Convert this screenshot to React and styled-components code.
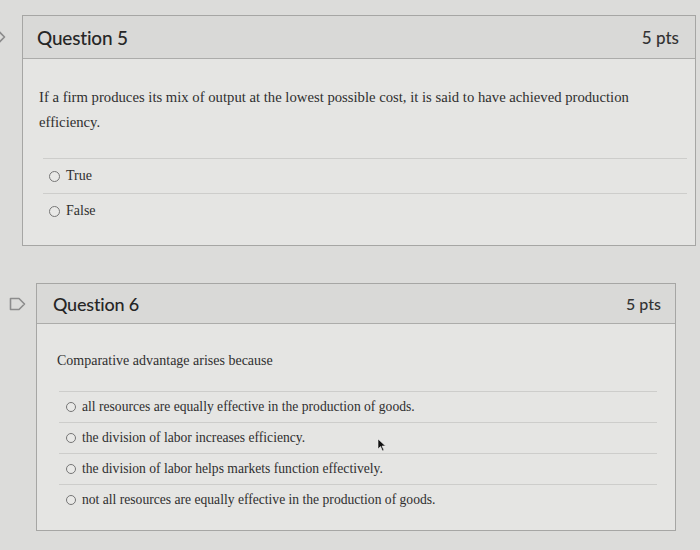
import styled, { createGlobalStyle } from "styled-components";

const GlobalStyle = createGlobalStyle`
  html, body {
    margin: 0;
    padding: 0;
    background: #dcdcda;
  }
  * { box-sizing: border-box; }
`;

const questions = [
  {
    id: 5,
    text: "If a firm produces its mix of output at the lowest possible cost, it is said to have achieved production efficiency.",
    answers: ["True", "False"],
    d: {
      cardLeft: 22, cardWidth: 674, headH: 43, titleSize: 19, ptsSize: 17,
      titlePad: 14, ptsPad: 16, bodyPad: 16, textTop: 26, textSize: 14.7, textGap: 23,
      optLeft: 20, optRight: 8, rowH: 35, optSize: 14, radio: 11,
      radioPad: 6, bottom: 17, flagShift: -11,
    },
  },
  {
    id: 6,
    text: "Comparative advantage arises because",
    answers: [
      "all resources are equally effective in the production of goods.",
      "the division of labor increases efficiency.",
      "the division of labor helps markets function effectively.",
      "not all resources are equally effective in the production of goods.",
    ],
    d: {
      cardLeft: 36, cardWidth: 640, headH: 40, titleSize: 18, ptsSize: 16,
      titlePad: 16, ptsPad: 14, bodyPad: 20, textTop: 24, textSize: 14, textGap: 18,
      optLeft: 22, optRight: 18, rowH: 31, optSize: 13.6, radio: 10,
      radioPad: 7, bottom: 15, flagShift: 9,
    },
  },
];

const Page = styled.div`
  position: relative;
  width: 700px;
  height: 550px;
  overflow: hidden;
  padding-top: 15px;
  display: flex;
  flex-direction: column;
  gap: 37px;
`;

const Row = styled.div`
  display: flex;
  align-items: flex-start;
`;

const FlagSlot = styled.div`
  width: ${(p) => p.$w}px;
  height: ${(p) => p.$h}px;
  flex: none;
  display: flex;
  align-items: center;
  overflow: visible;
`;

const Flag = styled.svg`
  flex: none;
  margin-left: ${(p) => p.$shift}px;
`;

const Card = styled.section`
  width: ${(p) => p.$w}px;
  border: 1px solid #a6a6a4;
  background: #e5e5e3;
`;

const Header = styled.header`
  height: ${(p) => p.$d.headH}px;
  display: flex;
  align-items: center;
  justify-content: space-between;
  padding: 0 ${(p) => p.$d.ptsPad}px 0 ${(p) => p.$d.titlePad}px;
  background: #d9d9d7;
  border-bottom: 1px solid #acacaa;
  font-family: Lato, "Noto Sans", sans-serif;
  color: #262626;
`;

const Title = styled.h2`
  margin: 0;
  font-size: ${(p) => p.$size}px;
  font-weight: 500;
  letter-spacing: -0.2px;
`;

const Points = styled.span`
  font-size: ${(p) => p.$size}px;
  font-weight: 500;
  color: #333;
`;

const Body = styled.div`
  padding: ${(p) => p.$d.textTop}px ${(p) => p.$d.optRight}px ${(p) => p.$d.bottom}px ${(p) => p.$d.bodyPad}px;
  font-family: "Liberation Serif", "Times New Roman", serif;
  color: #2f2f2f;
`;

const Prompt = styled.p`
  margin: 0 0 ${(p) => p.$gap}px;
  font-size: ${(p) => p.$size}px;
  line-height: 25px;
  padding-right: 40px;
`;

const Answers = styled.ul`
  list-style: none;
  margin: 0 0 0 ${(p) => p.$inset}px;
  padding: 0;
`;

const Answer = styled.li`
  height: ${(p) => p.$h}px;
  border-top: 1px solid #cdcdcb;
  display: flex;
  align-items: center;
  gap: 6px;
  padding-left: ${(p) => p.$pad}px;
  font-size: ${(p) => p.$size}px;
`;

const Radio = styled.span`
  width: ${(p) => p.$s}px;
  height: ${(p) => p.$s}px;
  border-radius: 50%;
  border: 1px solid #767676;
  background: #e9e9e7;
  flex: none;
`;

const Cursor = styled.svg`
  position: absolute;
  left: 377px;
  top: 438px;
`;

function FlagIcon({ shift }) {
  return (
    <Flag $shift={shift} width="17" height="14" viewBox="0 0 17 14">
      <path
        d="M1.5 1.5 H10 L15.5 7 L10 12.5 H1.5 Z"
        fill="none"
        stroke="#8c8c8c"
        strokeWidth="1.6"
        strokeLinejoin="round"
      />
    </Flag>
  );
}

function Question({ q }) {
  const d = q.d;
  return (
    <Row>
      <FlagSlot $w={d.cardLeft} $h={d.headH + 1}>
        <FlagIcon shift={d.flagShift} />
      </FlagSlot>
      <Card $w={d.cardWidth}>
        <Header $d={d}>
          <Title $size={d.titleSize}>Question {q.id}</Title>
          <Points $size={d.ptsSize}>5 pts</Points>
        </Header>
        <Body $d={d}>
          <Prompt $gap={d.textGap} $size={d.textSize}>{q.text}</Prompt>
          <Answers $inset={d.optLeft - d.bodyPad}>
            {q.answers.map((a) => (
              <Answer key={a} $h={d.rowH} $pad={d.radioPad} $size={d.optSize}>
                <Radio $s={d.radio} />
                {a}
              </Answer>
            ))}
          </Answers>
        </Body>
      </Card>
    </Row>
  );
}

export default function App() {
  return (
    <>
      <GlobalStyle />
      <Page>
        {questions.map((q) => (
          <Question key={q.id} q={q} />
        ))}
        <Cursor width="9" height="14" viewBox="0 0 9 14">
          <path d="M1 1 L1 11 L3.5 8.5 L5.5 13 L7 12.3 L5 8 L8.5 8 Z" fill="#111" stroke="#f2f2f2" strokeWidth="0.6" />
        </Cursor>
      </Page>
    </>
  );
}
